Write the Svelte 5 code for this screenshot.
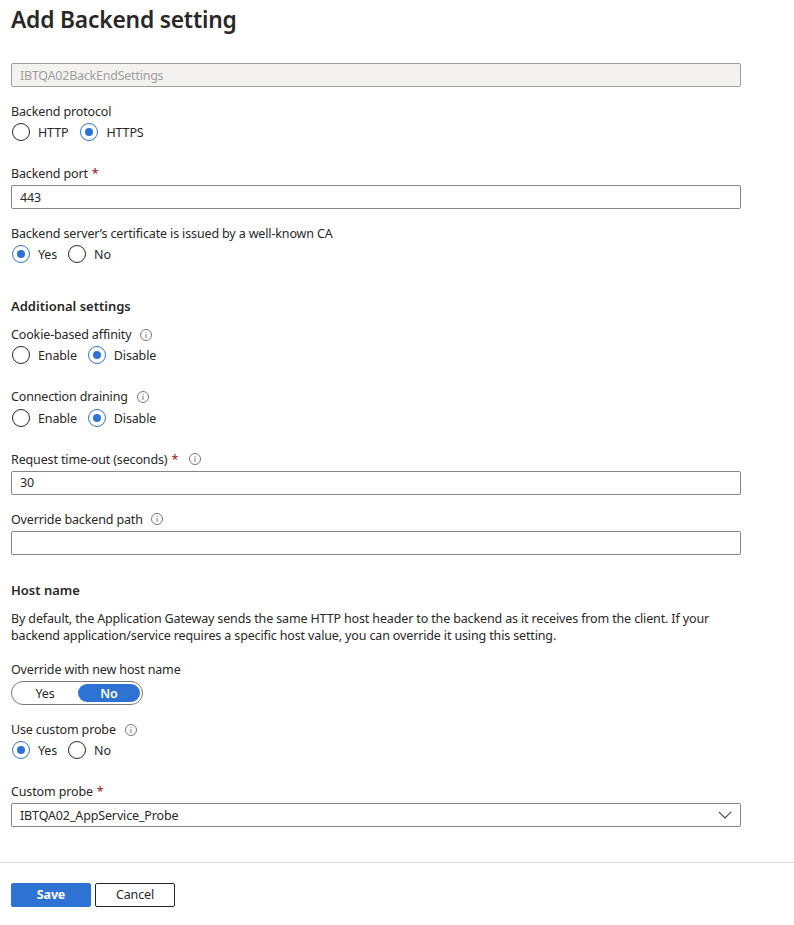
<script>
  let name = $state('IBTQA02BackEndSettings');
  let protocol = $state('HTTPS');
  let port = $state('443');
  let wellKnownCa = $state('Yes');
  let affinity = $state('Disable');
  let draining = $state('Disable');
  let timeout = $state('30');
  let path = $state('');
  let overrideHost = $state('No');
  let useProbe = $state('Yes');
  let probe = $state('IBTQA02_AppService_Probe');
</script>

{#snippet label(text, required, info)}
  <div class="label">
    <span>{text}</span>
    {#if required}<span class="required">*</span>{/if}
    {#if info}
      <svg class="info" viewBox="0 0 12 12" width="12" height="12">
        <circle cx="6" cy="6" r="5.5" />
        <path d="M6 5v4M6 3v1" />
      </svg>
    {/if}
  </div>
{/snippet}

{#snippet radios(options, value, select)}
  <div class="radios">
    {#each options as option}
      <button
        class="option"
        role="radio"
        aria-checked={value === option}
        onclick={() => select(option)}
      >
        <span class="circle" class:checked={value === option}></span>
        <span class="text">{option}</span>
      </button>
    {/each}
  </div>
{/snippet}

<main>
  <h1>Add Backend setting</h1>

  <div class="field">
    <input class="box" type="text" bind:value={name} disabled />
  </div>

  <div class="field choice protocol">
    {@render label('Backend protocol')}
    {@render radios(['HTTP', 'HTTPS'], protocol, (v) => (protocol = v))}
  </div>

  <div class="field">
    {@render label('Backend port', true)}
    <input class="box" type="text" bind:value={port} />
  </div>

  <div class="field choice last">
    {@render label('Backend server’s certificate is issued by a well-known CA')}
    {@render radios(['Yes', 'No'], wellKnownCa, (v) => (wellKnownCa = v))}
  </div>

  <h2>Additional settings</h2>

  <div class="field choice affinity">
    {@render label('Cookie-based affinity', false, true)}
    {@render radios(['Enable', 'Disable'], affinity, (v) => (affinity = v))}
  </div>

  <div class="field choice draining">
    {@render label('Connection draining', false, true)}
    {@render radios(['Enable', 'Disable'], draining, (v) => (draining = v))}
  </div>

  <div class="field">
    {@render label('Request time-out (seconds)', true, true)}
    <input class="box timeout" type="text" bind:value={timeout} />
  </div>

  <div class="field path">
    {@render label('Override backend path', false, true)}
    <input class="box" type="text" bind:value={path} />
  </div>

  <h2>Host name</h2>

  <p>
    By default, the Application Gateway sends the same HTTP host header to the backend as it receives from the client. If your<br />
    backend application/service requires a specific host value, you can override it using this setting.
  </p>

  <div class="field">
    {@render label('Override with new host name')}
    <div class="toggle">
      {#each ['Yes', 'No'] as option}
        <button class:active={overrideHost === option} onclick={() => (overrideHost = option)}>{option}</button>
      {/each}
    </div>
  </div>

  <div class="field choice">
    {@render label('Use custom probe', false, true)}
    {@render radios(['Yes', 'No'], useProbe, (v) => (useProbe = v))}
  </div>

  <div class="field probe">
    {@render label('Custom probe', true)}
    <div class="box select">
      <span>{probe}</span>
      <svg viewBox="0 0 14 8" width="14" height="8">
        <path d="M0.8 0.8L7 7L13.2 0.8" />
      </svg>
    </div>
  </div>
</main>

<footer>
  <button class="save">Save</button>
  <button class="cancel">Cancel</button>
</footer>

<style>
  :global(body) {
    margin: 0;
    background: #fff;
  }

  main, footer {
    font-family: "Noto Sans", "Open Sans", sans-serif;
    font-size: 12.5px;
    letter-spacing: -0.14px;
    line-height: 18px;
    color: #292827;
  }

  main {
    width: 730px;
    padding: 0 0 0 11px;
    white-space: nowrap;
  }

  button, input {
    font: inherit;
    letter-spacing: inherit;
    color: inherit;
    box-sizing: border-box;
  }

  h1 {
    margin: 0 0 23px;
    font-size: 22.8px;
    line-height: 40px;
    font-weight: 600;
    letter-spacing: -0.2px;
  }

  h2 {
    margin: 0 0 10px;
    font-size: 13px;
    line-height: 18px;
    font-weight: 600;
    letter-spacing: 0;
  }

  p {
    margin: 11px 0 16px;
    line-height: 17px;
  }

  .field {
    display: flex;
    flex-direction: column;
    gap: 3px;
    margin-bottom: 15px;
  }

  .choice {
    margin-bottom: 23px;
  }

  .draining {
    gap: 4px;
  }

  .last {
    margin-bottom: 34px;
  }

  .path {
    margin-bottom: 26px;
  }

  .probe {
    margin-bottom: 35px;
  }

  .label {
    display: flex;
    align-items: center;
    height: 18px;
    line-height: 20px;
  }

  .label span {
    height: 18px;
  }

  .label .required {
    margin-left: 4px;
    color: #a4262c;
    font-weight: 500;
  }

  .info {
    margin: 2px 0 0 9px;
    fill: none;
    stroke: #7a7876;
    stroke-width: 1;
  }

  .required + .info {
    margin: 0 0 0 11px;
  }

  .path .info {
    margin: 0 0 0 8px;
  }

  .box {
    box-sizing: border-box;
    width: 730px;
    height: 24px;
    margin: 0;
    padding: 0 8px;
    border: 1px solid #8a8886;
    border-radius: 2px;
    background: #fff;
    outline: none;
  }

  .box:disabled {
    background: #f3f2f1;
    color: #a19f9d;
    border-color: #a19f9d;
    letter-spacing: -0.24px;
  }

  .box.timeout {
    padding-bottom: 2px;
  }

  .radios {
    display: flex;
    gap: 11px;
    height: 18px;
    padding-left: 1px;
  }

  .protocol .radios {
    gap: 12px;
  }

  .option {
    display: flex;
    align-items: center;
    gap: 8px;
    padding: 0;
    border: 0;
    background: none;
  }

  .option .text {
    height: 18px;
    line-height: 20px;
  }

  .circle {
    display: flex;
    align-items: center;
    justify-content: center;
    box-sizing: border-box;
    width: 18px;
    height: 18px;
    border: 1px solid #292827;
    border-radius: 50%;
  }

  .circle.checked {
    border-color: #2e73d4;
  }

  .circle.checked::after {
    content: "";
    width: 8px;
    height: 8px;
    border-radius: 50%;
    background: #2e73d4;
  }

  .toggle {
    display: flex;
    gap: 2px;
    box-sizing: border-box;
    width: 132px;
    height: 24px;
    padding: 2px;
    border: 1px solid #7a7876;
    border-radius: 12px;
  }

  .toggle button {
    flex: 1;
    height: 18px;
    padding: 0;
    border: 0;
    border-radius: 9px;
    background: none;
    line-height: 20px;
  }

  .toggle .active {
    background: #2e73d4;
    color: #fff;
    font-weight: 600;
  }

  .select {
    display: flex;
    align-items: center;
    justify-content: space-between;
  }

  .select span {
    padding-top: 2px;
  }

  .select svg {
    fill: none;
    stroke: #484644;
    stroke-width: 1.1;
  }

  footer {
    display: flex;
    gap: 4px;
    padding: 20px 11px;
    border-top: 1px solid #dddcdb;
  }

  footer button {
    width: 80px;
    height: 24px;
    padding: 0;
    border: 1px solid #292827;
    border-radius: 2px;
    background: #fff;
    line-height: 20px;
  }

  footer .save {
    border-color: #2e73d4;
    background: #2e73d4;
    color: #fff;
    font-weight: 700;
  }
</style>
